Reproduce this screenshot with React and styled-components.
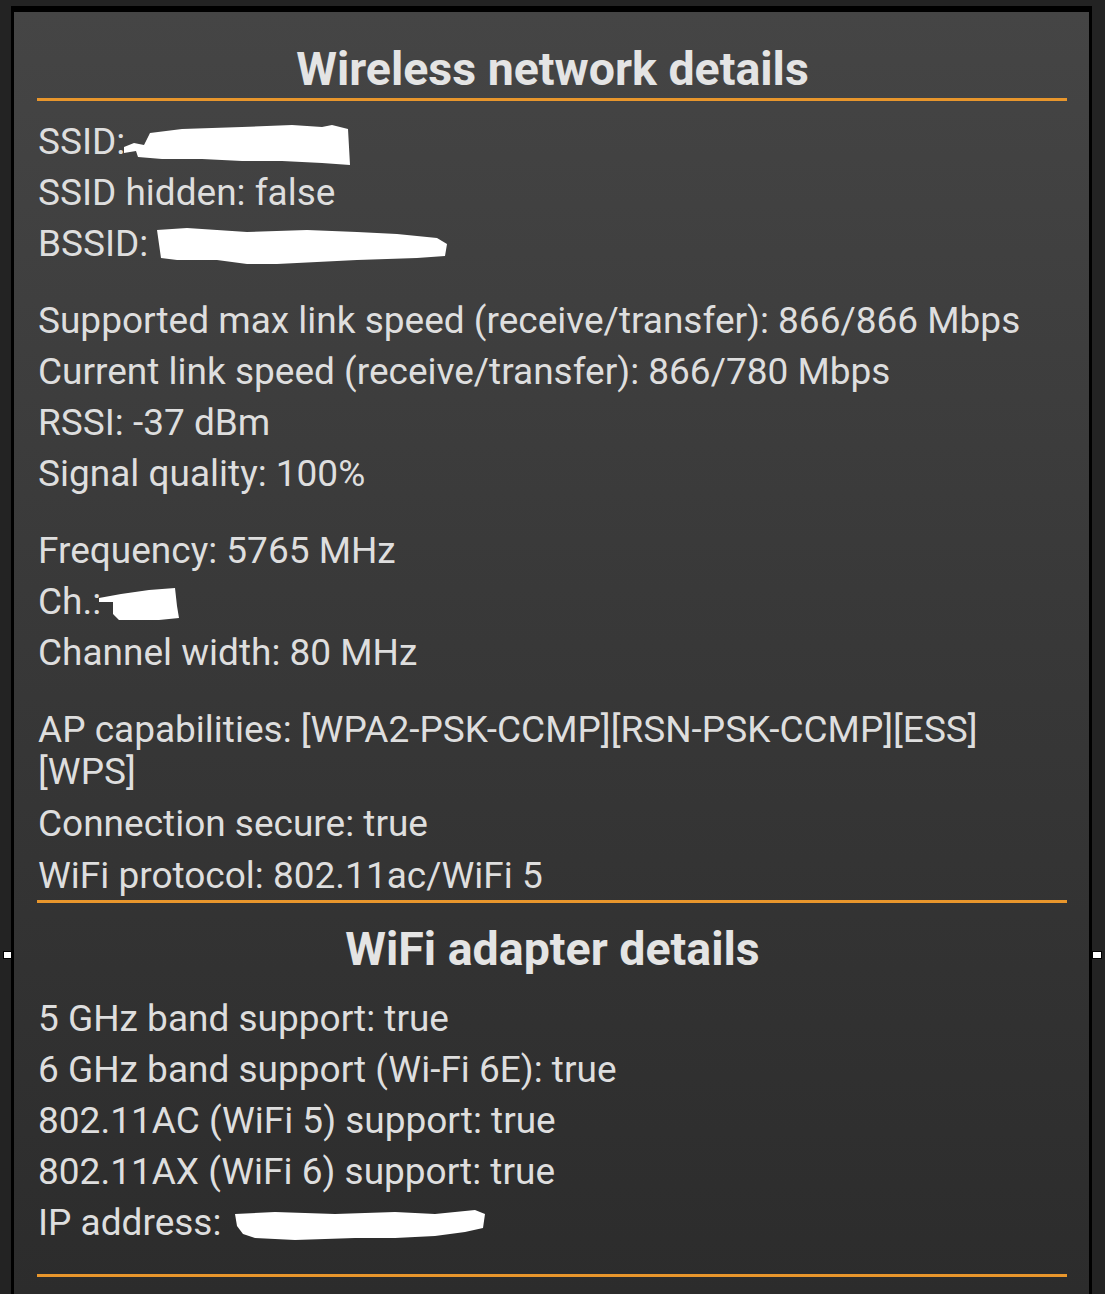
import React from 'react';
import styled, { createGlobalStyle } from 'styled-components';

const Global = createGlobalStyle`
  html, body { margin: 0; padding: 0; background: #202020; }
  body { font-family: Roboto, "Noto Sans", "Liberation Sans", sans-serif; }
`;

const Frame = styled.div`
  position: relative;
  height: 1294px;
  box-sizing: border-box;
  padding: 6px 13px 0 11px;
  background: #232323;
  overflow: hidden;
`;

const Panel = styled.div`
  height: 100%;
  box-sizing: border-box;
  border: solid #000;
  border-width: 6px 3px 0 3px;
  padding: 11px 22px 0 24px;
  background: linear-gradient(to bottom, #454545 0%, #393939 45%, #2c2c2c 100%);
  display: flex;
  flex-direction: column;
`;

const Heading = styled.h2`
  margin: ${p => p.$top}px 0 0 0;
  font-size: 46.5px;
  line-height: 56px;
  font-weight: 700;
  color: #e4e4e4;
  text-align: center;
`;

const Rule = styled.div`
  height: 3px;
  margin: ${p => p.$top}px 0 0 -1px;
  background: #e8962c;
`;

const List = styled.div`
  margin-top: ${p => p.$top}px;
  display: flex;
  flex-direction: column;
  gap: 35px;
`;

const Group = styled.div`
  display: flex;
  flex-direction: column;
  gap: ${p => p.$gap || 9}px;
`;

const Item = styled.p`
  margin: 0;
  font-size: 37px;
  line-height: 42px;
  color: #dedede;
  white-space: pre-wrap;
`;

const Blot = styled.svg`
  display: inline-block;
  vertical-align: middle;
  margin: -10px 0 -10px ${p => p.$ml || 0}px;
`;

const Handle = styled.div`
  position: absolute;
  top: 951px;
  left: ${p => p.$x}px;
  width: ${p => p.$w}px;
  height: 8px;
  box-sizing: border-box;
  background: #fff;
  border: 1px solid #000;
`;

function Redaction({ w, h, ml, d }) {
  return (
    <Blot width={w} height={h} viewBox={`0 0 ${w} ${h}`} $ml={ml} aria-hidden="true">
      <path d={d} fill="#fff" />
    </Blot>
  );
}

export default function App() {
  return (
    <>
      <Global />
      <Frame>
        <Panel>
          <Heading $top={18}>Wireless network details</Heading>
          <Rule $top={1} />
          <List $top={20}>
            <Group>
              <Item>
                SSID:
                <Redaction
                  w={228}
                  h={46}
                  ml={-3}
                  d="M2 26 L12 22 L22 24 L28 12 L60 8 L120 6 L170 4 L200 6 L210 4 L226 8 L228 44 L200 42 L160 40 L120 40 L80 38 L40 38 L16 36 L14 30 L2 32 Z"
                />
              </Item>
              <Item>SSID hidden: false</Item>
              <Item>
                BSSID:{' '}
                <Redaction
                  w={290}
                  h={40}
                  ml={0}
                  d="M0 4 L30 2 L90 6 L150 4 L200 6 L240 8 L260 10 L280 12 L290 18 L288 30 L260 32 L200 34 L160 36 L120 38 L90 38 L60 34 L20 34 L4 32 Z"
                />
              </Item>
            </Group>
            <Group>
              <Item>Supported max link speed (receive/transfer): 866/866 Mbps</Item>
              <Item>Current link speed (receive/transfer): 866/780 Mbps</Item>
              <Item>RSSI: -37 dBm</Item>
              <Item>Signal quality: 100%</Item>
            </Group>
            <Group>
              <Item>Frequency: 5765 MHz</Item>
              <Item>
                Ch.:
                <Redaction
                  w={80}
                  h={36}
                  ml={-2}
                  d="M0 12 L22 8 L50 4 L76 2 L78 20 L80 32 L60 34 L20 34 L14 28 L14 16 L0 16 Z"
                />
              </Item>
              <Item>Channel width: 80 MHz</Item>
            </Group>
            <Group $gap={10}>
              <Item>AP capabilities: [WPA2-PSK-CCMP][RSN-PSK-CCMP][ESS][WPS]</Item>
              <Item>Connection secure: true</Item>
              <Item>WiFi protocol: 802.11ac/WiFi 5</Item>
            </Group>
          </List>
          <Rule $top={3} />
          <Heading $top={18}>WiFi adapter details</Heading>
          <List $top={21}>
            <Group>
              <Item>5 GHz band support: true</Item>
              <Item>6 GHz band support (Wi-Fi 6E): true</Item>
              <Item>802.11AC (WiFi 5) support: true</Item>
              <Item>802.11AX (WiFi 6) support: true</Item>
              <Item>
                IP address:{' '}
                <Redaction
                  w={252}
                  h={34}
                  ml={4}
                  d="M0 6 L40 4 L100 6 L160 4 L200 6 L240 2 L250 6 L248 20 L230 24 L200 28 L160 30 L120 30 L60 32 L20 30 L8 26 L2 18 Z"
                />
              </Item>
            </Group>
          </List>
          <Rule $top={30} />
        </Panel>
        <Handle $x={3} $w={9} />
        <Handle $x={1092} $w={10} />
      </Frame>
    </>
  );
}
